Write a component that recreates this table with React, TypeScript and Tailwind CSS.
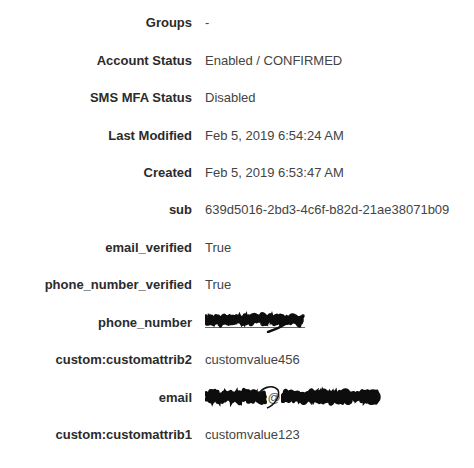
import React from "react";

type Row = { label: string; value: React.ReactNode };

// simple seeded random so the scribbles look the same every render
const rand = (seed: number) => {
	let s = seed;
	return () => {
		s = (s * 16807) % 2147483647;
		return (s - 1) / 2147483646;
	};
};

const scribble = (seed: number, w: number, h: number, passes: number) => {
	const r = rand(seed);
	let d = "";
	for (let p = 0; p < passes; p++) {
		let x = 1 + r() * 3;
		const y = h / 2 + (r() - 0.5) * h * 0.6;
		d += `M${x.toFixed(1)} ${y.toFixed(1)} `;
		while (x < w - 4) {
			const nx = Math.min(w - 3, x + 2 + r() * 5);
			const ny = 3 + r() * (h - 6);
			const c1x = x + (r() - 0.3) * 9;
			const c1y = -2 + r() * (h + 4);
			const c2x = nx - (r() - 0.3) * 9;
			const c2y = -2 + r() * (h + 4);
			d += `C${c1x.toFixed(1)} ${c1y.toFixed(1)} ${c2x.toFixed(1)} ${c2y.toFixed(1)} ${nx.toFixed(1)} ${ny.toFixed(1)} `;
			x = nx;
		}
	}
	return d;
};

const phonePath = scribble(7, 100, 14, 7);
const emailLeft = scribble(31, 62, 16, 8);
const emailRight = scribble(97, 98, 16, 8);

const PhoneScribble = () => (
	<span className="relative inline-block w-[102px] h-[20px] align-middle">
		<span className="absolute left-0 right-[2px] top-[15px] h-px bg-[#3b6fb0]" />
		<svg width="102" height="24" viewBox="0 0 102 24" className="absolute left-0 -top-[3px]">
			<path d={phonePath} fill="none" stroke="#0d0d0d" strokeWidth="3.4" strokeLinecap="round" transform="translate(0 4)" />
			<path d="M82 14 C76 18 70 21 63 23" fill="none" stroke="#0d0d0d" strokeWidth="2.4" strokeLinecap="round" />
		</svg>
	</span>
);

const EmailScribble = () => (
	<span className="relative inline-flex items-center w-[182px] h-[22px] align-middle">
		<svg width="62" height="24" viewBox="0 0 62 24" className="-mr-[2px]">
			<path d={emailLeft} fill="none" stroke="#0d0d0d" strokeWidth="3.6" strokeLinecap="round" transform="translate(0 4)" />
		</svg>
		<span className="relative w-[18px] text-center text-[#555]">
			@
			<svg width="28" height="26" viewBox="0 0 28 26" className="absolute -left-[8px] -top-[6px]">
				<path d="M2 12 C3 3 16 0 21 6 C24 13 16 22 10 24" fill="none" stroke="#111" strokeWidth="1.6" />
			</svg>
		</span>
		<svg width="100" height="24" viewBox="0 0 100 24" className="-ml-[2px]">
			<path d={emailRight} fill="none" stroke="#0d0d0d" strokeWidth="3.6" strokeLinecap="round" transform="translate(0 4)" />
			<circle cx="92" cy="12" r="6.5" fill="none" stroke="#0d0d0d" strokeWidth="2.6" />
		</svg>
	</span>
);

const rows: Row[] = [
	{ label: "Groups", value: "-" },
	{ label: "Account Status", value: "Enabled / CONFIRMED" },
	{ label: "SMS MFA Status", value: "Disabled" },
	{ label: "Last Modified", value: "Feb 5, 2019 6:54:24 AM" },
	{ label: "Created", value: "Feb 5, 2019 6:53:47 AM" },
	{ label: "sub", value: "639d5016-2bd3-4c6f-b82d-21ae38071b09" },
	{ label: "email_verified", value: "True" },
	{ label: "phone_number_verified", value: "True" },
	{ label: "phone_number", value: <PhoneScribble /> },
	{ label: "custom:customattrib2", value: "customvalue456" },
	{ label: "email", value: <EmailScribble /> },
	{ label: "custom:customattrib1", value: "customvalue123" },
];

const App: React.FC = () => {
	return (
		<div
			className="w-[474px] h-[468px] bg-white pt-[4px] text-[13px] leading-[15px] overflow-hidden"
			style={{ fontFamily: '"Liberation Sans", Arial, sans-serif' }}>
			{rows.map((row) => (
				<div key={row.label} className="flex items-center h-[37.45px]">
					<div className="w-[192px] shrink-0 text-right font-bold text-[#2b2b2b]">
						{row.label}
					</div>
					<div className="pl-[13px] text-[#444] whitespace-nowrap">{row.value}</div>
				</div>
			))}
		</div>
	);
};

export default App;
